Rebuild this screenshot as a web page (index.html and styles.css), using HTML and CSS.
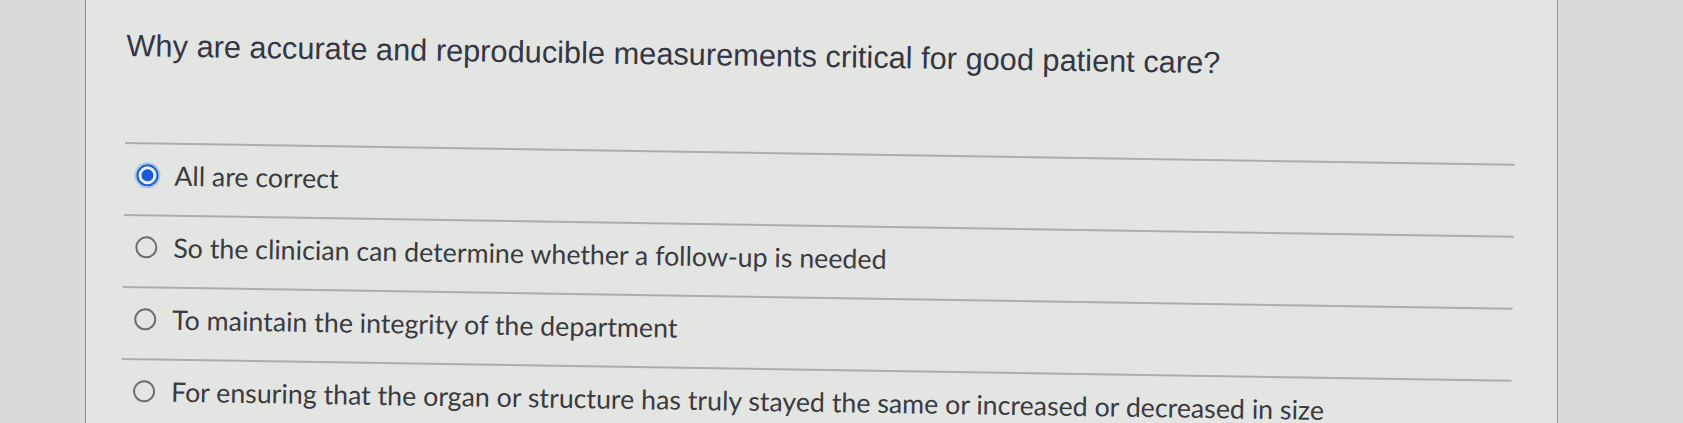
FILE: index.html
```html
<!DOCTYPE html>
<html lang="en">
<head>
<meta charset="utf-8">
<title>Question</title>
<link rel="stylesheet" href="styles.css">
</head>
<body>
<div class="screen">
  <div class="card">
    <div class="content">
      <h1 class="question">Why are accurate and reproducible measurements critical for good patient care?</h1>
      <div class="options">
        <label class="option">
          <span class="radio selected"><span class="dot"></span></span>
          <span class="label">All are correct</span>
        </label>
        <label class="option">
          <span class="radio"></span>
          <span class="label">So the clinician can determine whether a follow-up is needed</span>
        </label>
        <label class="option">
          <span class="radio"></span>
          <span class="label">To maintain the integrity of the department</span>
        </label>
        <label class="option">
          <span class="radio"></span>
          <span class="label">For ensuring that the organ or structure has truly stayed the same or increased or decreased in size</span>
        </label>
      </div>
    </div>
  </div>
</div>
</body>
</html>
```

FILE: styles.css
```css
html, body {
  margin: 0;
  padding: 0;
  height: 100%;
  overflow: hidden;
}

body {
  background: #d8dad7;
}

.screen {
  height: 423px;
  padding-left: 85px;
  box-sizing: border-box;
  display: flex;
}

.card {
  width: 1473px;
  height: 100%;
  background: #e3e5e2;
  border-left: 1px solid #8a8c8b;
  border-right: 1px solid #979998;
  box-sizing: border-box;
  padding: 28px 37px 0 39px;
}

.content {
  width: 1390px;
  transform: rotate(0.9deg);
  transform-origin: 0 114px;
}

.question {
  margin: 0;
  font-family: "Liberation Sans", Arial, sans-serif;
  font-weight: normal;
  font-size: 30.75px;
  line-height: 35px;
  color: #353643;
}

.options {
  margin-top: 79px;
  display: flex;
  flex-direction: column;
}

.option {
  display: flex;
  align-items: center;
  height: 72px;
  box-sizing: border-box;
  border-top: 2px solid #acadac;
  padding: 16px 0 24px 12px;
  font-family: Lato, "Open Sans", sans-serif;
  font-size: 26.75px;
  line-height: 30px;
  color: #3a3a40;
}

.option:last-child {
  height: auto;
  padding-bottom: 0;
}

.radio {
  flex: none;
  width: 22px;
  height: 22px;
  border-radius: 50%;
  border: 2px solid #6e6e72;
  box-sizing: border-box;
  margin-right: 16px;
  display: flex;
  align-items: center;
  justify-content: center;
}

.radio.selected {
  border-color: #1f5ccc;
  background: #e9f0fb;
  box-shadow: 0 0 0 2px #a9c7ef;
}

.dot {
  width: 12px;
  height: 12px;
  border-radius: 50%;
  background: #1a5ad6;
}

.label {
  white-space: nowrap;
}
```
